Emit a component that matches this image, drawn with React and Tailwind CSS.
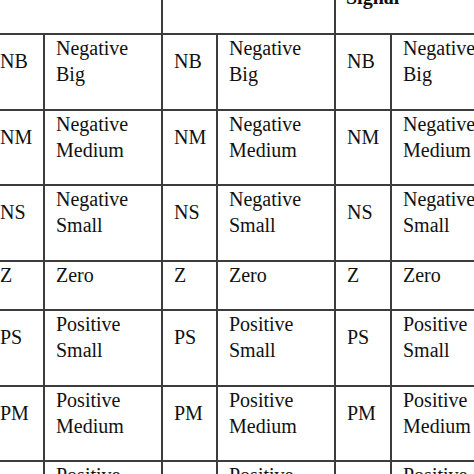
import React from "react";

// ─── Fuzzy sets ────────────────────────────────────────────────────────────────
const sets = [
  ["NB", "Negative", "Big"],
  ["NM", "Negative", "Medium"],
  ["NS", "Negative", "Small"],
  ["Z", "Zero"],
  ["PS", "Positive", "Small"],
  ["PM", "Positive", "Medium"],
  ["PB", "Positive", "Big"],
];

const cell = "border-2 border-[#3c3c3c] pl-[11px] pr-1 pt-0 pb-[21.5px] align-middle";

const App = () => {
  return (
    <div className="w-[474px] h-[474px] overflow-hidden bg-white text-[#111] font-['Liberation_Serif',serif] text-[20px] leading-[26px]">
      <table className="table-fixed border-collapse -ml-[13px] -mt-[16px] w-[521px]">
        <colgroup>
          <col className="w-[56px]" />
          <col className="w-[118px]" />
          <col className="w-[55px]" />
          <col className="w-[118px]" />
          <col className="w-[56px]" />
          <col className="w-[118px]" />
        </colgroup>
        <thead>
          <tr>
            <th colSpan={2} className="border-2 border-t-0 border-[#3c3c3c] h-[50px]" />
            <th colSpan={2} className="border-2 border-t-0 border-[#3c3c3c] h-[50px]" />
            <th colSpan={2} className="border-2 border-t-0 border-[#3c3c3c] h-[50px] pl-[10px] text-left align-top font-bold">
              Signal
            </th>
          </tr>
        </thead>
        <tbody>
          {sets.map(([abbr, ...words]) => (
            <tr key={abbr}>
              {[0, 1, 2].map((i) => (
                <React.Fragment key={i}>
                  <td className={cell}>{abbr}</td>
                  <td className={`${cell} align-top`}>
                    {words.map((w) => (
                      <div key={w}>{w}</div>
                    ))}
                  </td>
                </React.Fragment>
              ))}
            </tr>
          ))}
        </tbody>
      </table>
    </div>
  );
};

export default App;
